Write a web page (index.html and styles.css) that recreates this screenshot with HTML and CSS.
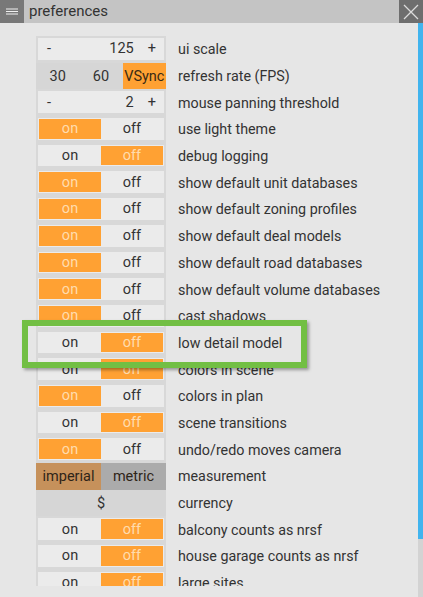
FILE: index.html
```html
<!DOCTYPE html>
<html>
  <head>
    <meta charset='utf-8'>
    <title>preferences</title>
    <meta name='viewport' content='width=device-width, initial-scale=1'>
    <link rel="stylesheet" href="styles.css">
  </head>

  <body>
    <main class="window">
      <div class="titlebar">
        <div class="menu-btn">
          <svg width="12" height="7" viewBox="0 0 12 7"><path d="M0 1h12M0 3.5h12M0 6h12" stroke="#f0f0f0" stroke-width="1.2"/></svg>
        </div>
        <div class="title">preferences</div>
        <div class="close-btn">
          <svg width="16" height="16" viewBox="0 0 16 16"><path d="M1 1L15 15M15 1L1 15" stroke="#dcdcdc" stroke-width="1.3"/></svg>
        </div>
      </div>

      <div class="body">
        <div class="pane">
          <div class="list">
            <div class="row">
              <div class="ctl stepper"><span class="minus">-</span><span class="value">125</span><span class="plus">+</span></div>
              <label>ui scale</label>
            </div>
            <div class="row">
              <div class="ctl choice"><span>30</span><span>60</span><span class="active">VSync</span></div>
              <label>refresh rate (FPS)</label>
            </div>
            <div class="row">
              <div class="ctl stepper"><span class="minus">-</span><span class="value">2</span><span class="plus">+</span></div>
              <label>mouse panning threshold</label>
            </div>
            <div class="row">
              <div class="ctl toggle"><span class="active">on</span><span>off</span></div>
              <label>use light theme</label>
            </div>
            <div class="row">
              <div class="ctl toggle"><span>on</span><span class="active">off</span></div>
              <label>debug logging</label>
            </div>
            <div class="row">
              <div class="ctl toggle"><span class="active">on</span><span>off</span></div>
              <label>show default unit databases</label>
            </div>
            <div class="row">
              <div class="ctl toggle"><span class="active">on</span><span>off</span></div>
              <label>show default zoning profiles</label>
            </div>
            <div class="row">
              <div class="ctl toggle"><span class="active">on</span><span>off</span></div>
              <label>show default deal models</label>
            </div>
            <div class="row">
              <div class="ctl toggle"><span class="active">on</span><span>off</span></div>
              <label>show default road databases</label>
            </div>
            <div class="row">
              <div class="ctl toggle"><span class="active">on</span><span>off</span></div>
              <label>show default volume databases</label>
            </div>
            <div class="row">
              <div class="ctl toggle"><span class="active">on</span><span>off</span></div>
              <label>cast shadows</label>
            </div>
            <div class="row">
              <div class="ctl toggle"><span>on</span><span class="active">off</span></div>
              <label>low detail model</label>
            </div>
            <div class="row">
              <div class="ctl toggle"><span>on</span><span class="active">off</span></div>
              <label>colors in scene</label>
            </div>
            <div class="row">
              <div class="ctl toggle"><span class="active">on</span><span>off</span></div>
              <label>colors in plan</label>
            </div>
            <div class="row">
              <div class="ctl toggle"><span>on</span><span class="active">off</span></div>
              <label>scene transitions</label>
            </div>
            <div class="row">
              <div class="ctl toggle"><span class="active">on</span><span>off</span></div>
              <label>undo/redo moves camera</label>
            </div>
            <div class="row">
              <div class="ctl units"><span class="imperial">imperial</span><span class="metric">metric</span></div>
              <label>measurement</label>
            </div>
            <div class="row">
              <div class="ctl currency"><span>$</span></div>
              <label>currency</label>
            </div>
            <div class="row">
              <div class="ctl toggle"><span>on</span><span class="active">off</span></div>
              <label>balcony counts as nrsf</label>
            </div>
            <div class="row">
              <div class="ctl toggle"><span>on</span><span class="active">off</span></div>
              <label>house garage counts as nrsf</label>
            </div>
            <div class="row">
              <div class="ctl toggle"><span>on</span><span class="active">off</span></div>
              <label>large sites</label>
            </div>
          </div>
        </div>
        <div class="scrollbar"><div class="thumb"></div></div>
      </div>

      <div class="highlight"></div>
    </main>
  </body>
</html>
```

FILE: styles.css
```css
body {
  margin: 0;
  font-family: Roboto, "Liberation Sans", sans-serif;
  color: #333;
}

.window {
  position: relative;
  display: flex;
  flex-direction: column;
  width: 423px;
  height: 597px;
  background: #e6e6e6;
  overflow: hidden;
}

.titlebar {
  display: flex;
  align-items: stretch;
  height: 23px;
  background: #c4c4c4;
}

.menu-btn,
.close-btn {
  display: flex;
  align-items: center;
  justify-content: center;
  width: 24px;
  background: #787878;
}

.close-btn {
  background: #6e6e6e;
}

.title {
  flex: 1;
  padding-left: 5px;
  font-size: 15px;
  line-height: 23px;
  color: #333;
}

.body {
  flex: 1;
  display: flex;
  min-height: 0;
}

.pane {
  flex: 1;
  display: flex;
  flex-direction: column;
  padding: 13px 0 11px 36px;
  min-height: 0;
}

.list {
  flex: 1;
  overflow: hidden;
}

.row {
  display: flex;
  align-items: center;
  gap: 12px;
  height: 26.7px;
}

.row label {
  font-size: 14.3px;
  color: #333;
}

.ctl {
  box-sizing: border-box;
  display: flex;
  width: 130px;
  height: 100%;
  font-size: 14.5px;
}

.ctl span {
  display: flex;
  align-items: center;
  justify-content: center;
}

.toggle,
.stepper {
  border: 2px solid #d8d8d8;
  border-bottom-width: 3px;
  padding: 1px;
  background: #ebebeb;
}

.toggle span {
  flex: 1;
}

.toggle .active {
  background: #ffa133;
  color: #ffdcae;
}

.stepper span {
  padding: 0 6px;
}

.stepper .minus {
  padding-left: 8px;
}

.stepper .value {
  flex: 1;
  justify-content: flex-end;
  padding-right: 8px;
}

.stepper .plus {
  padding-right: 7px;
}

.choice {
  background: #d6d6d6;
}

.choice span {
  flex: 1;
}

.choice .active {
  background: #ffa133;
  color: #3a2a14;
}

.units span {
  flex: 1;
  color: #2e2418;
}

.units .imperial {
  background: #c6915b;
}

.units .metric {
  background: #ababab;
}

.currency {
  background: #d6d6d6;
}

.currency span {
  flex: 1;
}

.scrollbar {
  width: 5px;
  background: #d3d3d3;
}

.scrollbar .thumb {
  height: 516px;
  background: #41b4ee;
}

.highlight {
  position: absolute;
  left: 22px;
  top: 320px;
  width: 273px;
  height: 36px;
  border: 6px solid #72bf44;
  box-shadow: 2px 2px 3px rgba(0, 0, 0, 0.35);
}
```
